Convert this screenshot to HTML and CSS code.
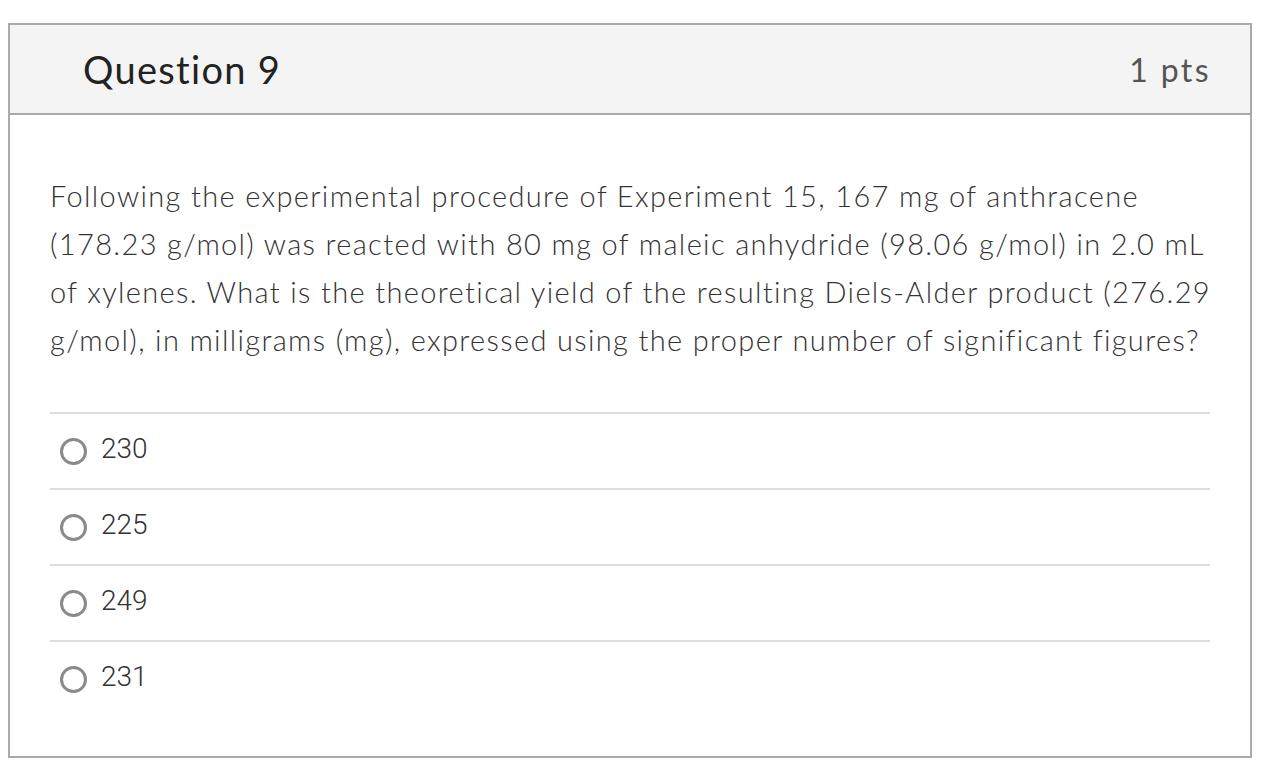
FILE: index.html
```html
<!DOCTYPE html>
<html>
<head>
<meta charset="utf-8">
<link rel="stylesheet" href="styles.css">
</head>
<body>
<div class="card">
  <div class="header">
    <div class="title">Question 9</div>
    <div class="pts">1 pts</div>
  </div>
  <div class="content">
    <p class="question">Following the experimental procedure of Experiment 15, 167 mg of anthracene (178.23 g/mol) was reacted with 80 mg of maleic anhydride (98.06 g/mol) in 2.0 mL of xylenes. What is the theoretical yield of the resulting Diels-Alder product (276.29 g/mol), in milligrams (mg), expressed using the proper number of significant figures?</p>
    <div class="answers">
      <div class="answer"><span class="radio"></span><span class="label">230</span></div>
      <div class="answer"><span class="radio"></span><span class="label">225</span></div>
      <div class="answer"><span class="radio"></span><span class="label">249</span></div>
      <div class="answer"><span class="radio"></span><span class="label">231</span></div>
    </div>
  </div>
</div>
</body>
</html>
```
FILE: styles.css
```css
html, body {
  margin: 0;
  padding: 0;
  background: #fff;
}
body {
  padding: 23px 0 0 8px;
  font-family: Lato, "Open Sans", sans-serif;
  color: #2d3b45;
}
.card {
  width: 1240px;
  height: 731px;
  border: 2px solid #aaaaaa;
  box-sizing: content-box;
}
.header {
  height: 88px;
  background: #f4f4f4;
  border-bottom: 2px solid #aaaaaa;
  display: flex;
  align-items: center;
  justify-content: space-between;
  padding: 0 41px 0 73px;
}
.title {
  font-size: 38px;
  font-weight: 400;
  letter-spacing: 1.3px;
  color: #222;
}
.pts {
  font-size: 32px;
  letter-spacing: 2.4px;
  color: #555;
  margin-right: -2px;
}
.content {
  padding: 0 40px;
}
.question {
  margin: 0 -20px 0 0;
  padding: 57px 0 48px;
  font-size: 29px;
  font-weight: 300;
  letter-spacing: 1.35px;
  line-height: 48px;
  color: #333;
}
.answer {
  border-top: 2px solid #dddddd;
  height: 74px;
  display: flex;
  align-items: center;
  padding-left: 10px;
}
.radio {
  width: 21px;
  height: 21px;
  border: 3px solid #8a8a8a;
  border-radius: 50%;
  margin-right: 14px;
}
.label {
  font-family: "Helvetica Neue", Roboto, sans-serif;
  font-size: 28px;
  font-weight: 300;
  color: #333;
  margin-bottom: 5px;
}
```
